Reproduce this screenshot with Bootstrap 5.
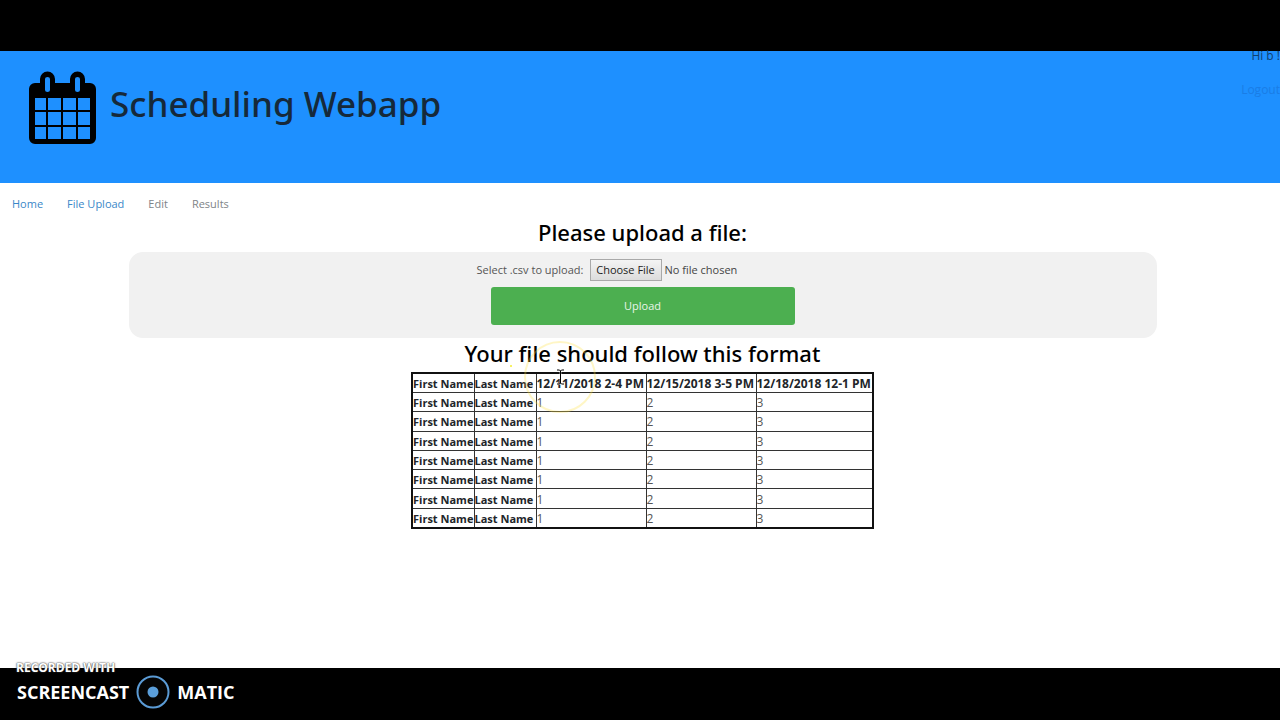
<!DOCTYPE html>
<html lang="en">
<head>
<meta charset="utf-8">
<meta name="viewport" content="width=device-width, initial-scale=1">
<title>Scheduling Webapp</title>
<link href="https://cdn.jsdelivr.net/npm/bootstrap@5.3.0/dist/css/bootstrap.min.css" rel="stylesheet">
<style>
  body { font-family: "Segoe UI", "Open Sans", sans-serif; font-size: 11px; line-height: 18px; color: #212529; overflow-x: hidden; }
  h1, h2 { font-family: "Segoe UI", "Noto Sans", sans-serif; }
  .bar-top { height: 51px; }
  .bar-bottom { height: 52px; }
  .site-header { background: #1e90ff; height: 132px; padding: 19px 0 0 28px; }
  .site-title { font-size: 35px; line-height: 44px; font-weight: 500; color: #16293a; margin: 12px 0 0 12px; }
  .account { top: -4px; right: 0; font-size: 12px; line-height: 18px; }
  .account span { color: #10406f; }
  .account a { color: #1a7de6; margin-top: 16px; }
  .site-nav { padding: 12px; gap: 24px; line-height: 18px; }
  .site-nav .nav-link { padding: 0; color: #3a87c8; }
  .site-nav .nav-link.disabled { color: #808488; }
  /* the page is slightly wider than the window */
  .page { width: calc(100% + 5px); margin-top: -7px; }
  .page h2 { font-size: 22px; line-height: 28px; font-weight: 500; color: #000; margin: 0; }
  .upload-box { width: 80%; margin: 6px auto 1px; padding: 7px 0 13px; background: #f1f1f1; border-radius: 14px; }
  .upload-box label { width: 110px; color: #555; }
  .file-row { width: 332px; height: 22px; gap: 3px; }
  .file-pick { width: 218px; color: #444; line-height: 18px; }
  .file-pick::file-selector-button { font: inherit; color: #222; height: 22px; width: 72px; padding: 0; margin: 0 3px 0 0; border: 1px solid #a9a9a9; background: linear-gradient(#f4f4f4, #dcdcdc); }
  .btn-upload { width: 304px; height: 38px; margin-top: 6px; padding: 1px 0 0; font-size: 11px; color: #e8f5e9; background: #4caf50; border: 0; border-radius: 3px; }
  .btn-upload:hover { background: #45a049; color: #fff; }
  .format-table { width: 463px; height: 157px; margin-top: 5px; table-layout: fixed; border-collapse: collapse; border: 2px solid #111; color: #555; text-align: left; font-size: 12px; line-height: 16px; }
  .format-table th, .format-table td { border: 1px solid #333; padding: 2px 0 0 0; white-space: nowrap; overflow: hidden; }
  .format-table th { color: #212529; font-weight: 700; }
  .format-table .person { font-size: 11px; }
  .c-name { width: 62px; }
  .c-date { width: 110px; }
  .mouse { left: 505px; top: 0; pointer-events: none; }
  .brand-row { padding: 6px 0 0 17px; gap: 6px; font-family: "Open Sans", sans-serif; font-weight: 700; font-size: 18px; line-height: 36px; color: #fff; }
  .brand-note { left: 16px; top: -9px; font: 700 12px/18px "Open Sans", sans-serif; color: #fff; text-shadow: 0 0 2px #333, 0 0 1px #555; }
</style>
</head>
<body class="d-flex flex-column min-vh-100">
  <div class="bar-top bg-black flex-shrink-0"></div>
  <header class="site-header position-relative d-flex align-items-start">
    <svg width="70" height="76" viewBox="0 0 70 76" aria-hidden="true">
      <path fill="#000" fill-rule="evenodd" d="M7 13h5V9a7 7 0 0 1 15 0v4h15V9a7 7 0 0 1 15 0v4h5a6 6 0 0 1 6 6v49a6 6 0 0 1-6 6H7a6 6 0 0 1-6-6V19a6 6 0 0 1 6-6zM17 9v11q0 2 2.500 2t2.500-2V9q0-2-2.500-2T17 9zM47 9v11q0 2 2.500 2t2.500-2V9q0-2-2.500-2T47 9zM7 28v12h11V28zM20 28v12h13V28zM35 28v12h13V28zM50 28v12h12V28zM7 42v13h11V42zM20 42v13h13V42zM35 42v13h13V42zM50 42v13h12V42zM7 57v12h11V57zM20 57v12h13V57zM35 57v12h13V57zM50 57v12h12V57z"/>
    </svg>
    <h1 class="site-title">Scheduling Webapp</h1>
    <div class="account position-absolute d-flex flex-column align-items-end">
      <span>Hi b !</span>
      <a href="#" class="text-decoration-none">Logout</a>
    </div>
  </header>
  <nav class="site-nav nav">
    <a class="nav-link" href="#">Home</a>
    <a class="nav-link" href="#">File Upload</a>
    <a class="nav-link disabled" href="#" aria-disabled="true">Edit</a>
    <a class="nav-link disabled" href="#" aria-disabled="true">Results</a>
  </nav>
  <main class="page flex-grow-1 text-center">
    <h2>Please upload a file:</h2>
    <form class="upload-box">
      <div class="file-row d-flex align-items-center mx-auto">
        <label class="text-nowrap text-start" for="csv">Select .csv to upload:</label>
        <input class="file-pick" type="file" id="csv" accept=".csv">
      </div>
      <button type="button" class="btn btn-upload">Upload</button>
    </form>
    <section class="position-relative">
      <h2>Your file should follow this format</h2>
      <table class="format-table mx-auto">
        <colgroup><col class="c-name"><col class="c-name"><col class="c-date"><col class="c-date"><col></colgroup>
        <thead>
          <tr><th class="person" scope="col">First Name</th><th class="person" scope="col">Last Name</th><th scope="col">12/11/2018 2-4 PM</th><th scope="col">12/15/2018 3-5 PM</th><th scope="col">12/18/2018 12-1 PM</th></tr>
        </thead>
        <tbody>
          <tr><th class="person">First Name</th><th class="person">Last Name</th><td>1</td><td>2</td><td>3</td></tr>
          <tr><th class="person">First Name</th><th class="person">Last Name</th><td>1</td><td>2</td><td>3</td></tr>
          <tr><th class="person">First Name</th><th class="person">Last Name</th><td>1</td><td>2</td><td>3</td></tr>
          <tr><th class="person">First Name</th><th class="person">Last Name</th><td>1</td><td>2</td><td>3</td></tr>
          <tr><th class="person">First Name</th><th class="person">Last Name</th><td>1</td><td>2</td><td>3</td></tr>
          <tr><th class="person">First Name</th><th class="person">Last Name</th><td>1</td><td>2</td><td>3</td></tr>
          <tr><th class="person">First Name</th><th class="person">Last Name</th><td>1</td><td>2</td><td>3</td></tr>
        </tbody>
      </table>
      <svg class="mouse position-absolute" width="100" height="80" viewBox="0 0 100 80" aria-hidden="true">
        <circle cx="55" cy="38" r="35" fill="none" stroke="#ffe040" stroke-opacity=".3" stroke-width="2"/>
        <circle cx="6" cy="27" r="1" fill="#f5ee30"/>
        <path d="M52 31h2.500l1 1 1-1H59M55.500 32v12M52 45h2.500l1-1 1 1H59" fill="none" stroke="#fff" stroke-opacity=".6" stroke-width="2"/>
        <path d="M52 31h2.500l1 1 1-1H59M55.500 32v12M52 45h2.500l1-1 1 1H59" fill="none" stroke="#000"/>
      </svg>
    </section>
  </main>
  <footer class="bar-bottom bg-black flex-shrink-0 position-relative">
    <span class="brand-note position-absolute text-nowrap">RECORDED WITH</span>
    <div class="brand-row d-flex align-items-center">
      <span>SCREENCAST</span>
      <svg width="36" height="36" viewBox="0 0 36 36" aria-hidden="true">
        <circle cx="18" cy="18" r="15.500" fill="#050505" stroke="#5b9bd5" stroke-width="2"/>
        <circle cx="18" cy="18" r="5.500" fill="#5b9fdb"/>
      </svg>
      <span>MATIC</span>
    </div>
  </footer>
<script src="https://cdn.jsdelivr.net/npm/bootstrap@5.3.0/dist/js/bootstrap.bundle.min.js"></script>
</body>
</html>
